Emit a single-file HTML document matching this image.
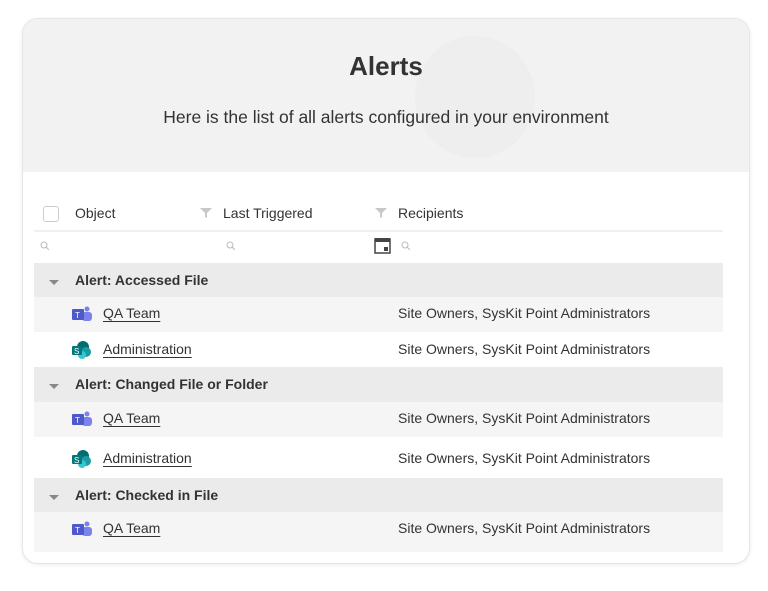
<!DOCTYPE html>
<html><head><style>
body{margin:0;width:768px;height:591px;background:#fff;font-family:"Liberation Sans",sans-serif;position:relative;overflow:hidden}
.card{position:absolute;left:22px;top:18px;width:726px;height:544px;border:1px solid #e6e6e6;border-radius:16px;box-shadow:0 1px 4px rgba(0,0,0,.08);overflow:hidden;background:#fff}
.hdr{position:absolute;left:0;top:0;width:100%;height:153px;background:#f2f2f2}
.circ{position:absolute;left:392px;top:17px;width:120px;height:122px;border-radius:50%;background:#eeeeee}
h1{position:absolute;top:32px;left:0;width:100%;text-align:center;margin:0;font-size:26px;font-weight:bold;color:#333}
.sub{position:absolute;top:88px;left:0;width:100%;text-align:center;font-size:17.5px;color:#333}
.a{position:absolute;font-size:14px;color:#333;white-space:nowrap}
.r{position:absolute;left:34px;width:689px}
.lnk{text-decoration:underline;text-underline-offset:3px}
.b{font-weight:bold}
</style></head><body>
<div class="card"><div class="hdr"><div class="circ"></div><h1>Alerts</h1><div class="sub">Here is the list of all alerts configured in your environment</div></div></div>
<div class="a" style="left:43px;top:206px;width:14px;height:14px;border:1px solid #ccc;border-radius:3px"></div>
<div class="a" style="left:75px;top:205px">Object</div>
<svg class="a" style="left:200px;top:207px" width="12" height="12"><path d="M0 1h12L7 6v5L5 10V6z" fill="#c8c8c8"/></svg>
<div class="a" style="left:223px;top:205px">Last Triggered</div>
<svg class="a" style="left:375px;top:207px" width="12" height="12"><path d="M0 1h12L7 6v5L5 10V6z" fill="#c8c8c8"/></svg>
<div class="a" style="left:398px;top:205px">Recipients</div>
<div class="r" style="top:230px;height:2px;background:#f0f0f0"></div>
<svg class="a" style="left:40px;top:241px" width="9" height="9"><circle cx="4" cy="4" r="3" fill="none" stroke="#bbb"/><path d="M6 6l3 3" stroke="#bbb"/></svg>
<svg class="a" style="left:226px;top:241px" width="9" height="9"><circle cx="4" cy="4" r="3" fill="none" stroke="#bbb"/><path d="M6 6l3 3" stroke="#bbb"/></svg>
<svg class="a" style="left:374px;top:237px" width="17" height="17"><rect x="1" y="2" width="15" height="14" fill="none" stroke="#444" stroke-width="1.5"/><rect x="1" y="1" width="15" height="4" fill="#444"/><rect x="10" y="10" width="4" height="4" fill="#444"/></svg>
<svg class="a" style="left:401px;top:241px" width="9" height="9"><circle cx="4" cy="4" r="3" fill="none" stroke="#bbb"/><path d="M6 6l3 3" stroke="#bbb"/></svg>

<div class="r" style="top:263px;height:34px;background:#ebebeb"></div>
<div class="r" style="top:297px;height:35px;background:#f5f5f5"></div>
<div class="r" style="top:367px;height:35px;background:#ebebeb"></div>
<div class="r" style="top:402px;height:35px;background:#f5f5f5"></div>
<div class="r" style="top:478px;height:34px;background:#ebebeb"></div>
<div class="r" style="top:512px;height:40px;background:#f5f5f5"></div>

<div class="a" style="left:49px;top:280px;border:5px solid transparent;border-top:5px solid #888;width:0;height:0"></div>
<div class="a b" style="left:75px;top:272px">Alert: Accessed File</div>
<div class="a" style="left:49px;top:384px;border:5px solid transparent;border-top:5px solid #888;width:0;height:0"></div>
<div class="a b" style="left:75px;top:376px">Alert: Changed File or Folder</div>
<div class="a" style="left:49px;top:495px;border:5px solid transparent;border-top:5px solid #888;width:0;height:0"></div>
<div class="a b" style="left:75px;top:487px">Alert: Checked in File</div>

<svg class="a" style="left:72px;top:306px" width="20" height="16"><circle cx="15" cy="3" r="2.5" fill="#7b83eb"/><rect x="10" y="6" width="10" height="9" rx="3" fill="#7b83eb"/><rect x="0" y="3" width="12" height="11" rx="1" fill="#5059c9"/><text x="3" y="12" font-size="8" fill="#fff" font-family="Liberation Sans">T</text></svg>
<div class="a lnk" style="left:103px;top:305px">QA Team</div>
<div class="a" style="left:398px;top:305px">Site Owners, SysKit Point Administrators</div>
<svg class="a" style="left:72px;top:341px" width="20" height="18"><circle cx="11" cy="6" r="6" fill="#036c70"/><circle cx="14" cy="11" r="5" fill="#1a9ba1"/><circle cx="10" cy="14" r="4" fill="#37c6d0"/><rect x="0" y="5" width="10" height="9" rx="1" fill="#03787c"/><text x="2" y="13" font-size="8" fill="#fff" font-family="Liberation Sans">S</text></svg>
<div class="a lnk" style="left:103px;top:341px">Administration</div>
<div class="a" style="left:398px;top:341px">Site Owners, SysKit Point Administrators</div>

<svg class="a" style="left:72px;top:411px" width="20" height="16"><circle cx="15" cy="3" r="2.5" fill="#7b83eb"/><rect x="10" y="6" width="10" height="9" rx="3" fill="#7b83eb"/><rect x="0" y="3" width="12" height="11" rx="1" fill="#5059c9"/><text x="3" y="12" font-size="8" fill="#fff" font-family="Liberation Sans">T</text></svg>
<div class="a lnk" style="left:103px;top:410px">QA Team</div>
<div class="a" style="left:398px;top:410px">Site Owners, SysKit Point Administrators</div>
<svg class="a" style="left:72px;top:450px" width="20" height="18"><circle cx="11" cy="6" r="6" fill="#036c70"/><circle cx="14" cy="11" r="5" fill="#1a9ba1"/><circle cx="10" cy="14" r="4" fill="#37c6d0"/><rect x="0" y="5" width="10" height="9" rx="1" fill="#03787c"/><text x="2" y="13" font-size="8" fill="#fff" font-family="Liberation Sans">S</text></svg>
<div class="a lnk" style="left:103px;top:450px">Administration</div>
<div class="a" style="left:398px;top:450px">Site Owners, SysKit Point Administrators</div>

<svg class="a" style="left:72px;top:521px" width="20" height="16"><circle cx="15" cy="3" r="2.5" fill="#7b83eb"/><rect x="10" y="6" width="10" height="9" rx="3" fill="#7b83eb"/><rect x="0" y="3" width="12" height="11" rx="1" fill="#5059c9"/><text x="3" y="12" font-size="8" fill="#fff" font-family="Liberation Sans">T</text></svg>
<div class="a lnk" style="left:103px;top:520px">QA Team</div>
<div class="a" style="left:398px;top:520px">Site Owners, SysKit Point Administrators</div>
</body></html>
